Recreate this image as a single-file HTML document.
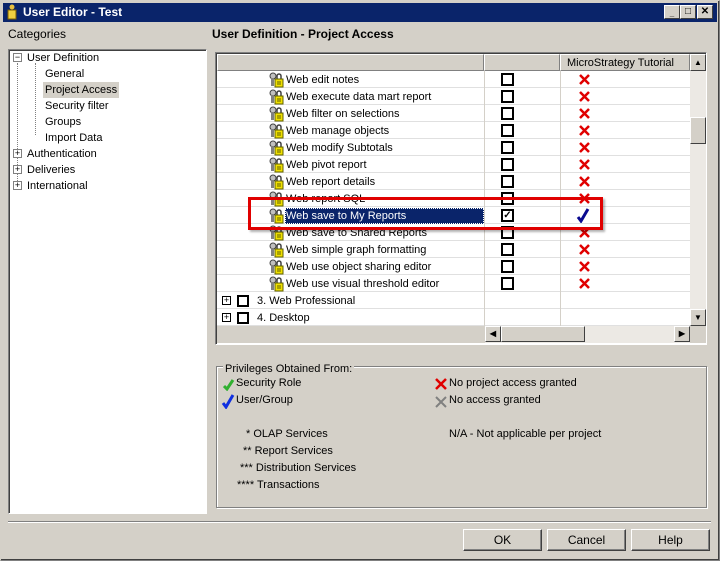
<!DOCTYPE html>
<html><head><style>
*{margin:0;padding:0;box-sizing:border-box}
body{width:720px;height:561px;background:#d4d0c8;font-family:"Liberation Sans",sans-serif;font-size:11px;color:#000;position:relative;overflow:hidden}
.a{position:absolute}
.title{left:0;top:0;width:720px;height:561px;border:1px solid #808080;border-top-color:#d4d0c8;border-left-color:#d4d0c8;box-shadow:inset -1px -1px 0 #404040}
.tb{left:3px;top:3px;width:714px;height:19px;background:#0a246a;color:#fff;font-weight:bold;font-size:12px;line-height:19px;padding-left:20px}
.wb{top:5px;width:16px;height:14px;background:#d4d0c8;border:1px solid;border-color:#fff #404040 #404040 #fff;font-size:10px;text-align:center;line-height:12px;font-weight:bold}
.sunk{border:1px solid;border-color:#808080 #fff #fff #808080;box-shadow:inset 1px 1px 0 #404040}
.row{left:217px;width:473px;height:17px;border-bottom:1px solid #e0e0e0;background:#fff}
.txt{left:286px;line-height:18px;white-space:nowrap}
.cb{left:501px;width:13px;height:13px;border:2px solid #000;background:#fff}
.btn{top:529px;width:79px;height:22px;border:1px solid;border-color:#fff #404040 #404040 #fff;box-shadow:inset -1px -1px 0 #808080;text-align:center;line-height:20px;font-size:12px}
.tr{line-height:16px;white-space:nowrap}
</style></head><body>
<div class="a title"></div>
<div class="a tb">User Editor - Test</div>
<svg class="a" style="left:6px;top:4px" width="12" height="16"><circle cx="6" cy="3" r="2.5" fill="#e8c040"/><rect x="2" y="6" width="8" height="9" fill="#f0d040" stroke="#806000"/></svg>
<div class="a wb" style="left:664px;font-size:8px;line-height:16px">_</div>
<div class="a wb" style="left:680px">□</div>
<div class="a wb" style="left:697px">✕</div>

<div class="a" style="left:8px;top:27px;font-size:12px">Categories</div>
<div class="a" style="left:212px;top:27px;font-size:12px;font-weight:bold">User Definition - Project Access</div>

<div class="a sunk" style="left:8px;top:49px;width:199px;height:465px;background:#fff"></div>
<div class="a" style="left:13px;top:53px;width:9px;height:9px;border:1px solid #808080;background:#fff;font-size:9px;line-height:7px;text-align:center">−</div>
<div class="a tr" style="left:27px;top:50px">User Definition</div>
<div class="a" style="left:35px;top:63px;height:72px;border-left:1px dotted #808080"></div>
<div class="a tr" style="left:45px;top:66px">General</div>
<div class="a tr" style="left:43px;top:82px;background:#d4d0c8;padding:0 2px">Project Access</div>
<div class="a tr" style="left:45px;top:98px">Security filter</div>
<div class="a tr" style="left:45px;top:114px">Groups</div>
<div class="a tr" style="left:45px;top:130px">Import Data</div>
<div class="a" style="left:17px;top:63px;height:124px;border-left:1px dotted #808080"></div>
<div class="a" style="left:13px;top:149px;width:9px;height:9px;border:1px solid #808080;background:#fff;font-size:9px;line-height:7px;text-align:center">+</div>
<div class="a" style="left:13px;top:165px;width:9px;height:9px;border:1px solid #808080;background:#fff;font-size:9px;line-height:7px;text-align:center">+</div>
<div class="a" style="left:13px;top:181px;width:9px;height:9px;border:1px solid #808080;background:#fff;font-size:9px;line-height:7px;text-align:center">+</div>
<div class="a tr" style="left:27px;top:146px">Authentication</div>
<div class="a tr" style="left:27px;top:162px">Deliveries</div>
<div class="a tr" style="left:27px;top:178px">International</div>

<!-- grid -->
<div class="a sunk" style="left:215px;top:52px;width:492px;height:293px;background:#fff"></div>
<div class="a" style="left:217px;top:54px;width:267px;height:17px;background:#d4d0c8;border:1px solid;border-color:#fff #808080 #808080 #fff"></div>
<div class="a" style="left:484px;top:54px;width:76px;height:17px;background:#d4d0c8;border:1px solid;border-color:#fff #808080 #808080 #fff"></div>
<div class="a" style="left:560px;top:54px;width:130px;height:17px;background:#d4d0c8;border:1px solid;border-color:#fff #808080 #808080 #fff;line-height:17px;padding-left:6px">MicroStrategy Tutorial</div>

<div id="rows"></div>
<script>
var t=["Web edit notes","Web execute data mart report","Web filter on selections","Web manage objects","Web modify Subtotals","Web pivot report","Web report details","Web report SQL","Web save to My Reports","Web save to Shared Reports","Web simple graph formatting","Web use object sharing editor","Web use visual threshold editor"];
var h="";
for(var i=0;i<15;i++){var y=71+17*i;
h+='<div class="a row" style="top:'+y+'px"></div>';
if(i<13){
h+='<svg class="a" style="left:268px;top:'+(y+1)+'px" width="16" height="16"><circle cx="5" cy="4" r="3" fill="#c0c0c0" stroke="#404040"/><rect x="3" y="6" width="3" height="8" fill="#808080"/><path d="M9 7V4a2 2 0 0 1 4 0v3" fill="none" stroke="#404040" stroke-width="1.5"/><rect x="7" y="7" width="8" height="8" fill="#f0e000" stroke="#606000"/><path d="M9 10h4M9 12h4" stroke="#606000"/></svg>';
if(i==8){h+='<div class="a txt" style="top:'+(y+1)+'px;left:285px;width:199px;height:16px;background:#0a246a;color:#fff;line-height:17px;padding-left:1px;outline:1px dotted #fff;outline-offset:-1px">'+t[i]+'</div>';
h+='<div class="a cb" style="top:'+(y+2)+'px;font-size:10px;line-height:9px;text-align:center;font-weight:bold">✓</div>';
h+='<svg class="a" style="left:576px;top:'+(y+1)+'px" width="14" height="15"><path d="M2 9l3 4L12 1" fill="none" stroke="#0a0a90" stroke-width="3"/></svg>';}
else{h+='<div class="a txt" style="top:'+y+'px">'+t[i]+'</div>';
h+='<div class="a cb" style="top:'+(y+2)+'px"></div>';
h+='<svg class="a" style="left:579px;top:'+(y+3)+'px" width="11" height="11"><path d="M1 1L10 10M10 1L1 10" stroke="#e00000" stroke-width="2.5"/></svg>';}
}else{
h+='<div class="a" style="left:222px;top:'+(y+4)+'px;width:9px;height:9px;border:1px solid #000;font-size:9px;line-height:7px;text-align:center">+</div>';
h+='<div class="a" style="left:237px;top:'+(y+3)+'px;width:12px;height:12px;border:2px solid #000"></div>';
h+='<div class="a txt" style="left:257px;top:'+y+'px">'+(i==13?"3. Web Professional":"4. Desktop")+'</div>';}
}
document.getElementById("rows").innerHTML=h;
</script>
<div class="a" style="left:484px;top:71px;height:255px;border-left:1px solid #d4d0c8"></div>
<div class="a" style="left:560px;top:71px;height:255px;border-left:1px solid #d4d0c8"></div>
<!-- vscroll -->
<div class="a" style="left:690px;top:54px;width:16px;height:272px;background:#ece9e4"></div>
<div class="a wb" style="left:690px;top:54px;height:17px;font-size:8px;line-height:15px">▲</div>
<div class="a wb" style="left:690px;top:117px;height:27px"></div>
<div class="a wb" style="left:690px;top:309px;height:17px;font-size:8px;line-height:15px">▼</div>
<!-- hscroll -->
<div class="a" style="left:217px;top:326px;width:489px;height:17px;background:#d4d0c8"></div>
<div class="a" style="left:485px;top:326px;width:205px;height:17px;background:#ece9e4"></div>
<div class="a wb" style="left:485px;top:326px;height:16px;font-size:8px;line-height:14px">◀</div>
<div class="a wb" style="left:501px;top:326px;width:84px;height:16px"></div>
<div class="a wb" style="left:674px;top:326px;height:16px;font-size:8px;line-height:14px">▶</div>
<!-- red highlight -->
<div class="a" style="left:248px;top:197px;width:355px;height:33px;border:3px solid #e00000;box-shadow:2px 2px 2px rgba(0,0,0,.3)"></div>

<!-- group box -->
<div class="a" style="left:216px;top:366px;width:491px;height:142px;border:1px solid #808080;box-shadow:1px 1px 0 #fff, inset 1px 1px 0 #fff"></div>
<div class="a tr" style="left:223px;top:361px;background:#d4d0c8;padding:0 2px">Privileges Obtained From:</div>
<svg class="a" style="left:223px;top:378px" width="12" height="13"><path d="M1 8l3 3L10 2" fill="none" stroke="#30b030" stroke-width="3"/></svg>
<div class="a tr" style="left:236px;top:375px">Security Role</div>
<svg class="a" style="left:221px;top:394px" width="14" height="15"><path d="M2 9l3 4L12 1" fill="none" stroke="#1030e0" stroke-width="3"/></svg>
<div class="a tr" style="left:236px;top:392px">User/Group</div>
<svg class="a" style="left:435px;top:378px" width="12" height="12"><path d="M1 1L11 11M11 1L1 11" stroke="#e00000" stroke-width="2.5"/></svg>
<div class="a tr" style="left:449px;top:375px">No project access granted</div>
<svg class="a" style="left:435px;top:396px" width="12" height="12"><path d="M1 1L11 11M11 1L1 11" stroke="#808080" stroke-width="2"/></svg>
<div class="a tr" style="left:449px;top:392px">No access granted</div>
<div class="a tr" style="left:246px;top:426px">* OLAP Services</div>
<div class="a tr" style="left:243px;top:443px">** Report Services</div>
<div class="a tr" style="left:240px;top:460px">*** Distribution Services</div>
<div class="a tr" style="left:237px;top:477px">**** Transactions</div>
<div class="a tr" style="left:449px;top:426px">N/A - Not applicable per project</div>

<div class="a" style="left:8px;top:521px;width:703px;border-top:1px solid #808080;border-bottom:1px solid #fff"></div>
<div class="a btn" style="left:463px">OK</div>
<div class="a btn" style="left:547px">Cancel</div>
<div class="a btn" style="left:631px">Help</div>
</body></html>
